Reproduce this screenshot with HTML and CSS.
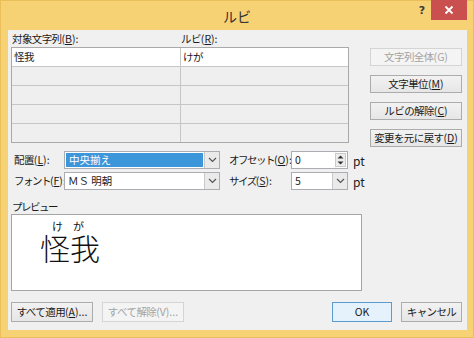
FILE: index.html
```html
<!DOCTYPE html>
<html lang="ja">
<head>
  <meta charset="UTF-8" />
  <title>ルビ</title>
  <link rel="stylesheet" href="styles.css">
</head>
<body>
  <div class="window">
    <div class="titlebar">
      <div class="title">ルビ</div>
      <div class="caption-btns">
        <span class="help">?</span>
        <span class="close">
          <svg width="10" height="10" viewBox="0 0 10 10"><path d="M1.5 1.5 L8.5 8.5 M8.5 1.5 L1.5 8.5" stroke="#fff" stroke-width="1.8"/></svg>
        </span>
      </div>
    </div>

    <div class="client">
      <div class="top">
        <div class="ruby-list">
          <div class="list-labels">
            <span class="col-label">対象文字列<span class="key">(<u>B</u>):</span></span>
            <span class="col-label">ルビ<span class="key">(<u>R</u>):</span></span>
          </div>
          <div class="grid">
            <div class="cell active">怪我</div><div class="cell active">けが</div>
            <div class="cell"></div><div class="cell"></div>
            <div class="cell"></div><div class="cell"></div>
            <div class="cell"></div><div class="cell"></div>
            <div class="cell"></div><div class="cell"></div>
          </div>
        </div>
        <div class="side-btns">
          <button class="btn disabled">文字列全体<span class="key">(G)</span></button>
          <button class="btn">文字単位<span class="key">(<u>M</u>)</span></button>
          <button class="btn">ルビの解除<span class="key">(<u>C</u>)</span></button>
          <button class="btn">変更を元に戻す<span class="key">(<u>D</u>)</span></button>
        </div>
      </div>

      <div class="options">
        <span class="opt-label">配置<span class="key">(<u>L</u>):</span></span>
        <div class="combo">
          <span class="combo-text selected">中央揃え</span>
          <span class="drop"><svg width="9" height="6" viewBox="0 0 9 6"><path d="M1 1 L4.5 4.5 L8 1" fill="none" stroke="#555" stroke-width="1.2"/></svg></span>
        </div>
        <span class="opt-label kana">オフセット<span class="key">(<u>O</u>):</span></span>
        <div class="combo">
          <span class="combo-text">0</span>
          <span class="spin">
            <svg width="7" height="4" viewBox="0 0 7 4"><path d="M0.5 3.5 L3.5 0.5 L6.5 3.5 Z" fill="#333"/></svg>
            <svg width="7" height="4" viewBox="0 0 7 4"><path d="M0.5 0.5 L3.5 3.5 L6.5 0.5 Z" fill="#333"/></svg>
          </span>
        </div>
        <span class="unit">pt</span>

        <span class="opt-label kana">フォント<span class="key">(<u>F</u>):</span></span>
        <div class="combo">
          <span class="combo-text">ＭＳ 明朝</span>
          <span class="drop"><svg width="9" height="6" viewBox="0 0 9 6"><path d="M1 1 L4.5 4.5 L8 1" fill="none" stroke="#555" stroke-width="1.2"/></svg></span>
        </div>
        <span class="opt-label kana">サイズ<span class="key">(<u>S</u>):</span></span>
        <div class="combo">
          <span class="combo-text">5</span>
          <span class="drop"><svg width="9" height="6" viewBox="0 0 9 6"><path d="M1 1 L4.5 4.5 L8 1" fill="none" stroke="#555" stroke-width="1.2"/></svg></span>
        </div>
        <span class="unit">pt</span>
      </div>

      <div class="preview-label kana">プレビュー</div>
      <div class="preview">
        <div class="sample-ruby">けが</div>
        <div class="sample-base">怪我</div>
      </div>

      <div class="footer">
        <div class="footer-left">
          <button class="btn wide">すべて適用<span class="key">(<u>A</u>)...</span></button>
          <button class="btn wide disabled">すべて解除<span class="key">(V)...</span></button>
        </div>
        <div class="footer-right">
          <button class="btn ok">OK</button>
          <button class="btn cancel kana">キャンセル</button>
        </div>
      </div>
    </div>
  </div>
</body>
</html>
```

FILE: styles.css
```css
* {
  box-sizing: border-box;
}
body {
  margin: 0;
  font-family: "Noto Sans CJK JP", "Noto Sans", sans-serif;
  font-size: 10.5px;
  letter-spacing: -0.6px;
  color: #1a1a1a;
  white-space: nowrap;
}
u {
  text-decoration: underline;
  text-underline-offset: 1px;
}
.key {
  letter-spacing: 0;
}
.kana {
  letter-spacing: -1.5px;
}

.window {
  width: 474px;
  height: 338px;
  background: #f7d274;
  border: 1px solid #e9bf5a;
  display: flex;
  flex-direction: column;
}

.titlebar {
  height: 29px;
  display: flex;
  align-items: flex-start;
}
.title {
  flex: 1;
  text-align: center;
  padding-left: 64px;
  line-height: 31px;
  font-size: 14px;
  letter-spacing: 0;
  color: #333;
}
.caption-btns {
  width: 64px;
  display: flex;
  align-items: flex-start;
}
.help {
  width: 22px;
  text-align: center;
  font-family: "DejaVu Sans", sans-serif;
  font-weight: bold;
  font-size: 11px;
  letter-spacing: 0;
  line-height: 19px;
  color: #3a3a3a;
  padding-left: 4px;
}
.close {
  width: 36px;
  height: 20px;
  margin-top: -1px;
  background: #c9504f;
  display: flex;
  align-items: center;
  justify-content: center;
}

.client {
  flex: 1;
  margin: 0 6px 7px 7px;
  background: #f0f0f0;
  padding: 0 5px 0 3px;
}

.top {
  display: flex;
  gap: 21px;
}
.ruby-list {
  width: 338px;
}
.list-labels {
  display: flex;
  height: 17px;
  line-height: 17px;
}
.col-label:first-child {
  width: 170px;
  padding-left: 1px;
}
.grid {
  display: grid;
  grid-template-columns: 168px 1fr;
  grid-auto-rows: 18px;
  gap: 1px;
  background: #c6c6c6;
  border: 1px solid #a9a9a9;
}
.cell {
  background: #efefef;
  padding-left: 2px;
  line-height: 18px;
}
.cell.active {
  background: #fff;
}

.side-btns {
  width: 92px;
  margin-top: 18px;
  display: flex;
  flex-direction: column;
  gap: 9px;
}

.btn {
  font-family: inherit;
  font-size: 10.5px;
  letter-spacing: -0.6px;
  color: #1a1a1a;
  height: 18px;
  padding: 0;
  line-height: 16px;
  white-space: nowrap;
  background: linear-gradient(#f2f2f2, #e6e6e6);
  border: 1px solid #acacac;
  border-radius: 0;
}
.btn.disabled {
  color: #a3a3a3;
  background: #f4f4f4;
  border-color: #d4d4d4;
}

.options {
  margin-top: 4px;
  display: grid;
  grid-template-columns: 53px 156px 71px 57px auto;
  grid-auto-rows: 18px;
  row-gap: 3px;
  align-items: center;
}
.opt-label {
  padding-left: 3px;
  line-height: 18px;
}
.opt-label:nth-child(3),
.opt-label:nth-child(8) {
  padding-left: 9px;
}
.unit {
  padding-left: 5px;
  font-size: 12px;
  letter-spacing: 0;
}
.combo {
  height: 18px;
  background: #fff;
  border: 1px solid #abadb3;
  display: flex;
  align-items: stretch;
}
.combo-text {
  flex: 1;
  padding-left: 3px;
  line-height: 16px;
  letter-spacing: 0;
}
.combo-text.selected {
  margin: 1px 0 1px 1px;
  padding-left: 3px;
  line-height: 14px;
  background: #3d95da;
  color: #fff;
}
.drop {
  width: 15px;
  margin-left: 1px;
  background: #eaeaea;
  border-left: 1px solid #c9c9c9;
  display: flex;
  align-items: center;
  justify-content: center;
}
.spin {
  width: 11px;
  margin: 1px;
  background: #ececec;
  border: 1px solid #c9c9c9;
  display: flex;
  flex-direction: column;
  align-items: center;
  justify-content: space-evenly;
}
.spin svg {
  display: block;
}

.preview-label {
  margin-top: 9px;
  height: 15px;
  line-height: 15px;
  padding-left: 1px;
}
.preview {
  width: 351px;
  height: 77px;
  background: #fff;
  border: 1px solid #a5a5a5;
  padding: 5px 0 0 28px;
  color: #111;
}
.sample-ruby {
  font-size: 11px;
  line-height: 12px;
  letter-spacing: 10px;
  padding-left: 12px;
}
.sample-base {
  font-weight: 300;
  font-size: 30px;
  line-height: 30px;
  letter-spacing: 0;
}

.footer {
  margin-top: 11px;
  display: flex;
  justify-content: space-between;
}
.footer-left,
.footer-right {
  display: flex;
  gap: 9px;
}
.footer .btn {
  height: 20px;
  line-height: 18px;
}
.btn.wide {
  width: 82px;
}
.btn.ok {
  width: 60px;
  background: #e5f1fb;
  border-color: #5b9bd0;
  letter-spacing: 0;
}
.btn.cancel {
  width: 61px;
}
```
